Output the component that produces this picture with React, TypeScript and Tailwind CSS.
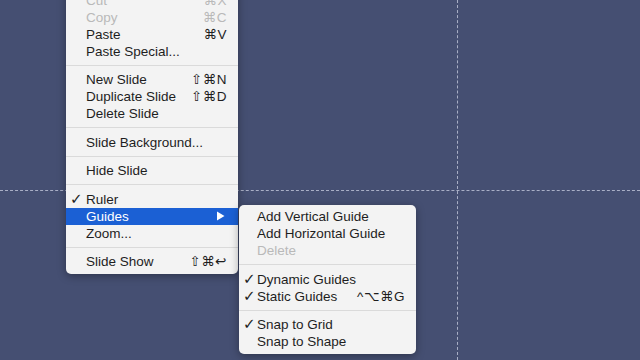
import React from 'react';

type Item =
    | { sep: true }
    | { sep?: false; label: string; key?: string; check?: boolean; disabled?: boolean; active?: boolean; arrow?: boolean };

const mainItems: Item[] = [
    { label: 'Cut', key: '⌘X', disabled: true },
    { label: 'Copy', key: '⌘C', disabled: true },
    { label: 'Paste', key: '⌘V' },
    { label: 'Paste Special...' },
    { sep: true },
    { label: 'New Slide', key: '⇧⌘N' },
    { label: 'Duplicate Slide', key: '⇧⌘D' },
    { label: 'Delete Slide' },
    { sep: true },
    { label: 'Slide Background...' },
    { sep: true },
    { label: 'Hide Slide' },
    { sep: true },
    { label: 'Ruler', check: true },
    { label: 'Guides', active: true, arrow: true },
    { label: 'Zoom...' },
    { sep: true },
    { label: 'Slide Show', key: '⇧⌘↩' },
];

const subItems: Item[] = [
    { label: 'Add Vertical Guide' },
    { label: 'Add Horizontal Guide' },
    { label: 'Delete', disabled: true },
    { sep: true },
    { label: 'Dynamic Guides', check: true },
    { label: 'Static Guides', check: true, key: '^⌥⌘G' },
    { sep: true },
    { label: 'Snap to Grid', check: true },
    { label: 'Snap to Shape' },
];

function MenuList({ items, indent }: { items: Item[]; indent: string }) {
    return (
        <div className="flex flex-col">
            {items.map((it, i) =>
                it.sep ? (
                    <div key={i} className="h-[11.5px] flex items-center">
                        <div className="h-px w-full bg-[#dadada]" />
                    </div>
                ) : (
                    <div
                        key={i}
                        className={`relative flex items-center h-[17px] pr-[11px] ${indent} ${
                            it.active ? 'bg-[#1b60d4] text-white' : it.disabled ? 'text-[#b9b9b9]' : 'text-[#1e1e1e]'
                        }`}
                    >
                        {it.check && <span className="absolute left-[4px] top-[-1px] text-[15px] font-bold">✓</span>}
                        <span className="flex-1">{it.label}</span>
                        {it.key && <span className="tracking-[0.5px]">{it.key}</span>}
                        {it.arrow && (
                            <svg width="9" height="10" viewBox="0 0 9 10" className="mr-[2px]">
                                <path d="M1 0.5 L8.5 5 L1 9.5 Z" fill="#fff" />
                            </svg>
                        )}
                    </div>
                )
            )}
        </div>
    );
}

export default function App() {
    return (
        <div
            className="relative w-[640px] h-[360px] overflow-hidden bg-[#454f72] text-[13.5px] leading-[17px]"
            style={{ fontFamily: '"Liberation Sans", "DejaVu Sans", sans-serif' }}
        >
            {/* guides */}
            <div className="absolute left-0 right-0 top-[190px] border-t border-dashed border-[#a9afc6]" />
            <div className="absolute top-0 bottom-0 left-[457px] border-l border-dashed border-[#a9afc6]" />

            {/* main context menu */}
            <div className="absolute left-[66px] top-[-13px] w-[172px] pt-[4.5px] pb-[4px] bg-[#f3f3f3] rounded-[5px] shadow-[0_2px_8px_rgba(0,0,0,0.35)]">
                <MenuList items={mainItems} indent="pl-[20px]" />
            </div>

            {/* guides submenu */}
            <div className="absolute left-[239px] top-[205px] w-[177px] pt-[3px] pb-[4px] bg-[#f3f3f3] rounded-[5px] shadow-[0_2px_8px_rgba(0,0,0,0.35)]">
                <MenuList items={subItems} indent="pl-[18px]" />
            </div>
        </div>
    );
}
